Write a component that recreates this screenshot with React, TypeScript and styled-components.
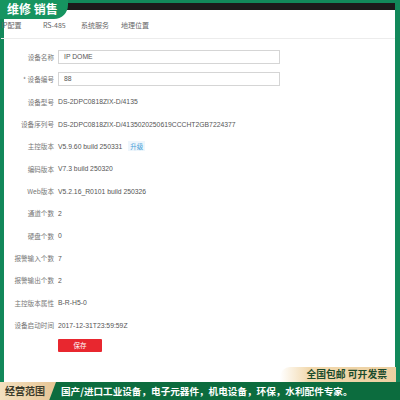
import React from "react";
import styled, { createGlobalStyle } from "styled-components";

const Global = createGlobalStyle`
  html, body { margin: 0; padding: 0; background: #fff; }
  body { font-family: "Liberation Sans", "Noto Sans CJK SC", sans-serif; }
`;

const Page = styled.div`
  width: 400px;
  height: 400px;
  position: relative;
  overflow: hidden;
  display: flex;
  flex-direction: column;
  background: #fff;
`;

const Frame = styled.div`
  flex: 1;
  border-top: 3px solid #12885a;
  border-left: 4px solid #12885a;
  border-right: 5px solid #12885a;
  display: flex;
  flex-direction: column;
  min-height: 0;
`;

const BlackBar = styled.div`
  height: 7px;
  margin-left: 62px;
  background: #1c1a1b;
`;

const Badge = styled.div`
  position: absolute;
  left: 0;
  top: 0;
  width: 68px;
  height: 19px;
  background: #169460;
  border-bottom-right-radius: 14px;
  color: #fff;
  font-family: "Noto Sans CJK SC", sans-serif;
  font-weight: 700;
  font-size: 12px;
  line-height: 18px;
  padding-left: 7px;
  box-sizing: border-box;
  white-space: nowrap;
`;

const Tabs = styled.div`
  display: flex;
  align-items: center;
  height: 24px;
  margin-top: 5px;
  margin-left: -3px;
  border-bottom: 1px solid #ececec;
  padding-bottom: 3px;
  box-sizing: border-box;
  overflow: hidden;
`;

const Tab = styled.span<{ $w: number }>`
  width: ${(p) => p.$w}px;
  flex: none;
  font-family: "Noto Sans CJK SC", sans-serif;
  font-size: 7px;
  color: #666;
  white-space: nowrap;
`;

const Form = styled.div`
  display: grid;
  grid-template-columns: 50px 1fr;
  grid-auto-rows: 22.33px;
  column-gap: 4px;
  align-items: center;
  margin-top: 7px;
`;

const Label = styled.div`
  text-align: right;
  font-family: "Noto Sans CJK SC", sans-serif;
  font-size: 6.6px;
  color: #777;
  white-space: nowrap;
`;

const Value = styled.div`
  font-family: "Liberation Sans", "Noto Sans CJK SC", sans-serif;
  font-size: 6.8px;
  color: #555;
  white-space: nowrap;
  display: flex;
  align-items: center;
  gap: 6px;
`;

const Input = styled.div`
  width: 222px;
  height: 14px;
  border: 1px solid #d5d5d5;
  box-sizing: border-box;
  font-family: "Liberation Sans", sans-serif;
  font-size: 6.8px;
  color: #555;
  line-height: 12px;
  padding-left: 5px;
`;

const Link = styled.span`
  color: #4a9fd8;
  font-family: "Noto Sans CJK SC", sans-serif;
  font-size: 6.5px;
  background: #eef6fc;
  padding: 0 2px;
`;

const SaveButton = styled.div`
  width: 44px;
  height: 13px;
  margin-top: -4px;
  background: #e8272f;
  color: #fff;
  font-family: "Noto Sans CJK SC", sans-serif;
  font-size: 6.5px;
  line-height: 13px;
  text-align: center;
  border-radius: 1px;
`;

const ShipBanner = styled.div`
  position: absolute;
  right: 4px;
  bottom: 18px;
  width: 116px;
  height: 15px;
  background: linear-gradient(90deg, rgba(240, 214, 170, 0) 0%, #f2d9ae 25%, #ecd0a2 100%);
  border-top-left-radius: 10px;
  font-family: "Noto Sans CJK SC", sans-serif;
  font-weight: 700;
  font-size: 9.8px;
  line-height: 15px;
  color: #1b4b2c;
  text-align: right;
  padding-right: 9px;
  box-sizing: border-box;
  white-space: nowrap;
`;

const BottomBar = styled.div`
  height: 18px;
  background: #0c6c3e;
  display: flex;
  align-items: center;
`;

const ScopeTag = styled.div`
  height: 18px;
  width: 56px;
  flex: none;
  background: linear-gradient(90deg, #f4e0bf, #e6c595);
  clip-path: polygon(0 0, 100% 0, 88% 100%, 0 100%);
  font-family: "Noto Sans CJK SC", sans-serif;
  font-weight: 700;
  font-size: 10px;
  line-height: 18px;
  color: #3a3a2a;
  padding-left: 5px;
  box-sizing: border-box;
  white-space: nowrap;
`;

const ScopeText = styled.div`
  margin-left: 5px;
  font-family: "Noto Sans CJK SC", sans-serif;
  font-weight: 700;
  font-size: 9.6px;
  color: #fff;
  white-space: nowrap;
`;

type Row = { label: string; value?: string; input?: string; link?: string };

const rows: Row[] = [
  { label: "设备名称", input: "IP DOME" },
  { label: "* 设备编号", input: "88" },
  { label: "设备型号", value: "DS-2DPC0818ZIX-D/4135" },
  { label: "设备序列号", value: "DS-2DPC0818ZIX-D/4135020250619CCCHT2GB7224377" },
  { label: "主控版本", value: "V5.9.60 build 250331", link: "升级" },
  { label: "编码版本", value: "V7.3 build 250320" },
  { label: "Web版本", value: "V5.2.16_R0101 build 250326" },
  { label: "通道个数", value: "2" },
  { label: "硬盘个数", value: "0" },
  { label: "报警输入个数", value: "7" },
  { label: "报警输出个数", value: "2" },
  { label: "主控版本属性", value: "B-R-H5-0" },
  { label: "设备启动时间", value: "2017-12-31T23:59:59Z" },
];

export default function App() {
  return (
    <>
      <Global />
      <Page>
        <Frame>
          <BlackBar />
          <Tabs>
            <Tab $w={42}>IP配置</Tab>
            <Tab $w={38}>RS-485</Tab>
            <Tab $w={40}>系统服务</Tab>
            <Tab $w={40}>地理位置</Tab>
          </Tabs>
          <Form>
            {rows.map((r) => (
              <React.Fragment key={r.label}>
                <Label>{r.label}</Label>
                {r.input !== undefined ? (
                  <Input>{r.input}</Input>
                ) : (
                  <Value>
                    {r.value}
                    {r.link && <Link>{r.link}</Link>}
                  </Value>
                )}
              </React.Fragment>
            ))}
            <span />
            <SaveButton>保存</SaveButton>
          </Form>
        </Frame>
        <BottomBar>
          <ScopeTag>经营范围</ScopeTag>
          <ScopeText>国产/进口工业设备，电子元器件，机电设备，环保，水利配件专家。</ScopeText>
        </BottomBar>
        <Badge>维修 销售</Badge>
        <ShipBanner>全国包邮 可开发票</ShipBanner>
      </Page>
    </>
  );
}
